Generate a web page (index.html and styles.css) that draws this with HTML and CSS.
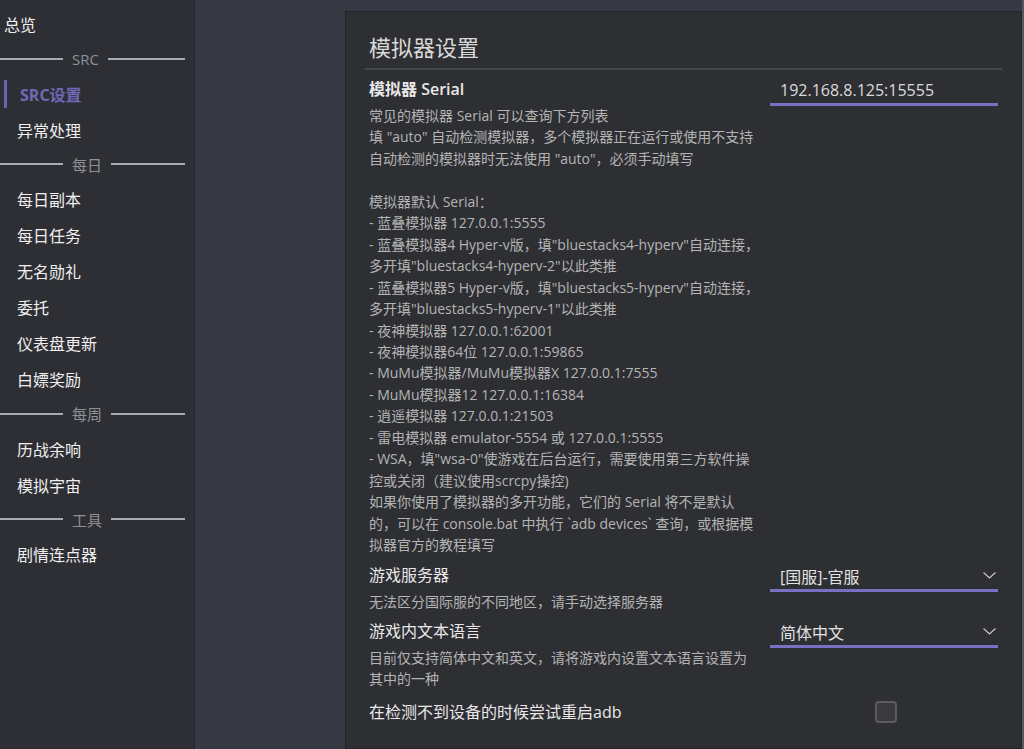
FILE: index.html
```html
<!DOCTYPE html>
<html lang="zh-CN">
<head>
  <meta charset="UTF-8" />
  <meta name="viewport" content="width=device-width, initial-scale=1.0">
  <title>SRC - 模拟器设置</title>
  <link rel="stylesheet" href="styles.css">
</head>
<body>
  <aside class="sidebar">
    <a href="#" class="nav-item overview">总览</a>
    <div class="nav-divider"><span class="line"></span><span class="label">SRC</span><span class="line"></span></div>
    <a href="#" class="nav-item active"><span class="bar"></span>SRC设置</a>
    <a href="#" class="nav-item">异常处理</a>
    <div class="nav-divider"><span class="line"></span><span class="label">每日</span><span class="line"></span></div>
    <a href="#" class="nav-item">每日副本</a>
    <a href="#" class="nav-item">每日任务</a>
    <a href="#" class="nav-item">无名勋礼</a>
    <a href="#" class="nav-item">委托</a>
    <a href="#" class="nav-item">仪表盘更新</a>
    <a href="#" class="nav-item">白嫖奖励</a>
    <div class="nav-divider"><span class="line"></span><span class="label">每周</span><span class="line"></span></div>
    <a href="#" class="nav-item">历战余响</a>
    <a href="#" class="nav-item">模拟宇宙</a>
    <div class="nav-divider"><span class="line"></span><span class="label">工具</span><span class="line"></span></div>
    <a href="#" class="nav-item">剧情连点器</a>
  </aside>

  <main>
    <section class="card">
      <h2 class="card-title">模拟器设置</h2>
      <div class="card-rule"></div>

      <div class="setting">
        <div class="setting-text">
          <div class="setting-label serial">模拟器 Serial</div>
          <p class="setting-help">
            常见的模拟器 Serial 可以查询下方列表<br>
            填 "auto" 自动检测模拟器，多个模拟器正在运行或使用不支持<br>
            自动检测的模拟器时无法使用 "auto"，必须手动填写<br>
            <br>
            模拟器默认 Serial：<br>
            - 蓝叠模拟器 127.0.0.1:5555<br>
            - 蓝叠模拟器4 Hyper-v版，填"bluestacks4-hyperv"自动连接，<br>
            多开填"bluestacks4-hyperv-2"以此类推<br>
            - 蓝叠模拟器5 Hyper-v版，填"bluestacks5-hyperv"自动连接，<br>
            多开填"bluestacks5-hyperv-1"以此类推<br>
            - 夜神模拟器 127.0.0.1:62001<br>
            - 夜神模拟器64位 127.0.0.1:59865<br>
            - MuMu模拟器/MuMu模拟器X 127.0.0.1:7555<br>
            - MuMu模拟器12 127.0.0.1:16384<br>
            - 逍遥模拟器 127.0.0.1:21503<br>
            - 雷电模拟器 emulator-5554 或 127.0.0.1:5555<br>
            - WSA，填"wsa-0"使游戏在后台运行，需要使用第三方软件操<br>
            控或关闭（建议使用scrcpy操控)<br>
            如果你使用了模拟器的多开功能，它们的 Serial 将不是默认<br>
            的，可以在 console.bat 中执行 `adb devices` 查询，或根据模<br>
            拟器官方的教程填写
          </p>
        </div>
        <div class="control">
          <input class="text-input" type="text" value="192.168.8.125:15555">
        </div>
      </div>

      <div class="setting">
        <div class="setting-text">
          <div class="setting-label">游戏服务器</div>
          <p class="setting-help">无法区分国际服的不同地区，请手动选择服务器</p>
        </div>
        <div class="control">
          <div class="select">
            <span>[国服]-官服</span>
            <svg class="chevron" width="13" height="7" viewBox="0 0 13 7"><polyline points="0.5,0.5 6.5,6 12.5,0.5" fill="none" stroke="#c9c9c9" stroke-width="1.2"/></svg>
          </div>
        </div>
      </div>

      <div class="setting">
        <div class="setting-text">
          <div class="setting-label">游戏内文本语言</div>
          <p class="setting-help">目前仅支持简体中文和英文，请将游戏内设置文本语言设置为<br>其中的一种</p>
        </div>
        <div class="control">
          <div class="select">
            <span>简体中文</span>
            <svg class="chevron" width="13" height="7" viewBox="0 0 13 7"><polyline points="0.5,0.5 6.5,6 12.5,0.5" fill="none" stroke="#c9c9c9" stroke-width="1.2"/></svg>
          </div>
        </div>
      </div>

      <div class="setting checkbox-row">
        <div class="setting-text">
          <div class="setting-label">在检测不到设备的时候尝试重启adb</div>
        </div>
        <div class="control">
          <span class="checkbox"></span>
        </div>
      </div>
    </section>
    <div class="scrollbar"></div>
  </main>
</body>
</html>
```

FILE: styles.css
```css
* {
  box-sizing: border-box;
  margin: 0;
  padding: 0;
}

body {
  font-family: "Open Sans", "Noto Sans CJK SC", sans-serif;
  display: flex;
  height: 100vh;
  overflow: hidden;
  background-color: #363944;
  color: #e6e6e6;
}

/* Sidebar */
.sidebar {
  width: 195px;
  flex-shrink: 0;
  background-color: #2e2f34;
  border-right: 1px solid #25262a;
  padding: 6px 9px 0 0;
  display: flex;
  flex-direction: column;
}

.nav-item {
  display: flex;
  align-items: center;
  height: 36px;
  padding-left: 17px;
  font-size: 16px;
  color: #f0f0f0;
  text-decoration: none;
}

.nav-item.overview {
  padding-left: 4px;
}

.nav-item.active {
  padding-left: 4px;
  color: #6f69b8;
  font-weight: bold;
}

.nav-item .bar {
  width: 3px;
  height: 28px;
  background-color: #6a65ad;
  margin-right: 13px;
}

.nav-divider {
  display: grid;
  grid-template-columns: 63px auto 1fr;
  align-items: center;
  gap: 9px;
  height: 33.5px;
}

.nav-divider .line {
  height: 2px;
  background-color: #a8abb1;
}

.nav-divider .label {
  font-size: 15px;
  color: #8d9096;
}

/* Main area */
main {
  flex: 1;
  display: flex;
  padding-left: 150px;
}

.card {
  flex: 1;
  margin-top: 11px;
  background-color: #2e2f33;
  border: 1px solid #24252a;
  padding: 20px 19px 0 19px;
}

.scrollbar {
  width: 2px;
  background-color: #55585f;
}

.card-title {
  font-size: 22px;
  font-weight: normal;
  line-height: 30px;
  color: #d9d9d9;
  padding-left: 4px;
}

.card-rule {
  height: 2px;
  margin-top: 6px;
  background-color: #45474c;
}

.setting {
  display: flex;
  justify-content: space-between;
  gap: 8px;
  padding: 7px 4px 0;
}

.setting-text {
  flex: 1;
}

.setting-label {
  font-size: 16px;
  line-height: 24px;
  color: #e8e8e8;
}

.setting-label.serial {
  font-weight: 600;
}

.setting-help {
  margin-top: 4px;
  font-size: 14px;
  line-height: 21.45px;
  color: #b4b4b4;
  white-space: nowrap;
}

.control {
  width: 228px;
  flex-shrink: 0;
}

.text-input {
  display: block;
  width: 100%;
  height: 29px;
  padding: 0 0 0 10px;
  border: none;
  border-bottom: 3px solid #7970c4;
  background: transparent;
  font-family: inherit;
  font-size: 16px;
  color: #dadada;
  outline: none;
}

.select {
  display: flex;
  align-items: center;
  justify-content: space-between;
  height: 29px;
  padding: 0 2px 0 10px;
  border-bottom: 3px solid #7970c4;
  font-size: 16px;
  color: #e2e2e2;
}

.checkbox-row {
  align-items: center;
  min-height: 37px;
}

.checkbox-row .control {
  display: flex;
  padding-left: 105px;
}

.checkbox {
  width: 22px;
  height: 22px;
  border: 2px solid #5b5c60;
  border-radius: 4px;
  background-color: #3a3a3c;
}
```
